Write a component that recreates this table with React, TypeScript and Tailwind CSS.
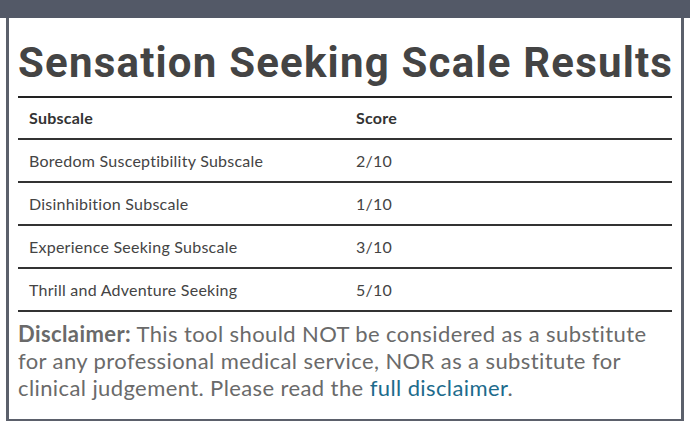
const rows = [
  { name: "Boredom Susceptibility Subscale", score: "2/10" },
  { name: "Disinhibition Subscale", score: "1/10" },
  { name: "Experience Seeking Subscale", score: "3/10" },
  { name: "Thrill and Adventure Seeking", score: "5/10" },
]

export default function App() {
  return (
    <div className="w-[690px] h-[421px] bg-white overflow-hidden flex flex-col">
      <div className="h-[18px] bg-[#535967] shrink-0" />
      <div className="flex-1 mx-[6px] border-x-[3px] border-b-2 border-[#5b606b] px-[9px] pt-[21px]">
        <h1
          className="text-[42px] font-bold text-[#444] leading-[48px] tracking-[1.2px] whitespace-nowrap"
          style={{ fontFamily: "Roboto, sans-serif" }}
        >
          Sensation Seeking Scale Results
        </h1>
        <div className="mt-[9px] border-t-2 border-[#222]" style={{ fontFamily: "Lato, sans-serif" }}>
          <div className="flex h-[42px] items-center border-b-2 border-[#333] text-[16px] tracking-[0.25px] font-bold text-[#333]">
            <div className="w-[338px] pl-[11px]">Subscale</div>
            <div>Score</div>
          </div>
          {rows.map((r) => (
            <div
              key={r.name}
              className="flex h-[43px] items-center border-b-2 border-[#333] text-[16px] tracking-[0.25px] text-[#444]"
            >
              <div className="w-[338px] pl-[11px]">{r.name}</div>
              <div>{r.score}</div>
            </div>
          ))}
        </div>
        <p
          className="mt-[8px] max-w-[652px] text-[22px] leading-[27px] tracking-[0.4px] text-[#6a6a6a]"
          style={{ fontFamily: "Lato, sans-serif" }}
        >
          <span className="font-bold">Disclaimer:</span> This tool should NOT be considered as a substitute
          for any professional medical service, NOR as a substitute for clinical judgement. Please read the{" "}
          <a className="text-[#1d6b8c]">full disclaimer</a>.
        </p>
      </div>
    </div>
  )
}
